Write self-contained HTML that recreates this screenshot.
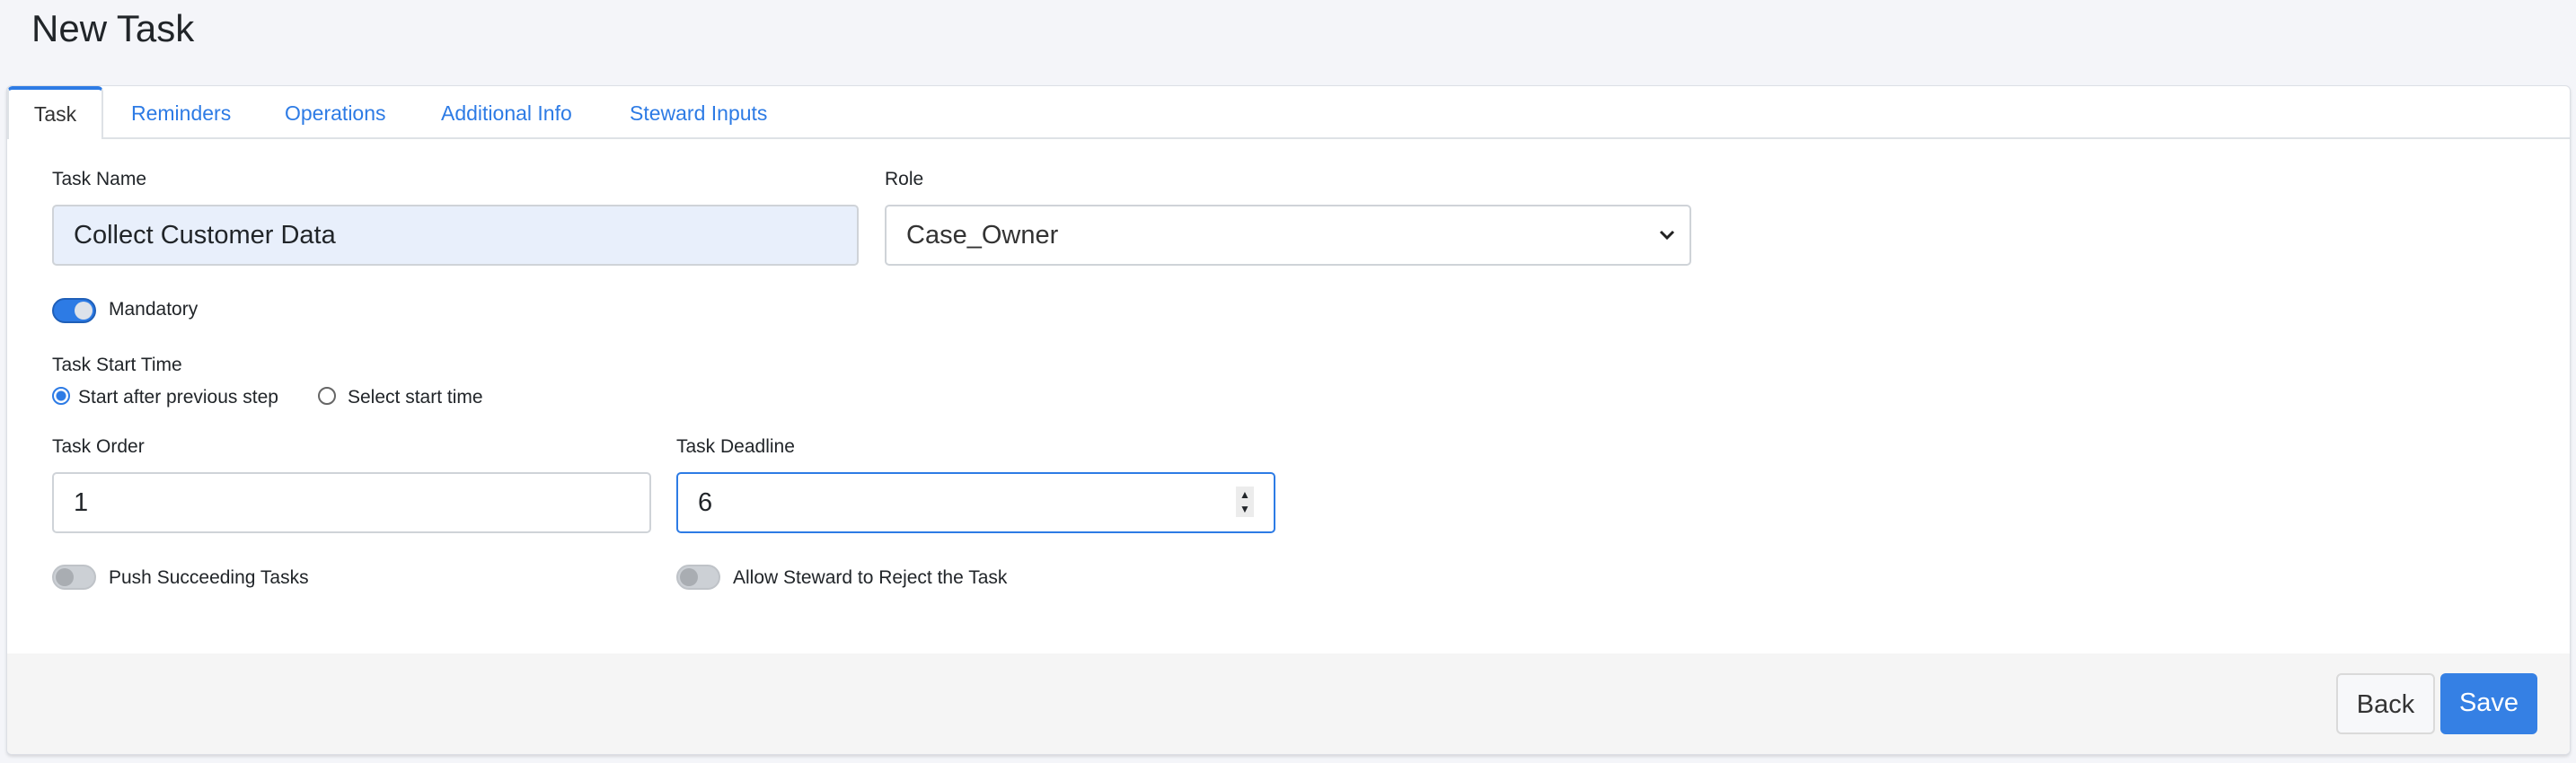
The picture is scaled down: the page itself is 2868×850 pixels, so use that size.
<!DOCTYPE html>
<html><head><style>
*{box-sizing:border-box;margin:0;padding:0}
body{width:2868px;height:850px;background:#f4f5f9;font-family:"Liberation Sans",Arial,sans-serif;color:#212529;position:relative;overflow:hidden}
.a{position:absolute}
.title{left:35px;top:6px;font-size:42px;line-height:52px}
.card{left:7px;top:95px;width:2855px;height:746px;background:#fff;border:1px solid #dcdfe5;border-radius:6px;overflow:hidden;box-shadow:0 2px 3px rgba(0,0,0,.12)}
.tabline{left:0;top:57px;width:100%;height:2px;background:#dee2e6}
.tab{top:0;height:59px;font-size:23px;line-height:60px;color:#2d7be5}
.tab0{left:0;width:107px;border:2px solid #dee2e6;border-top:4px solid #2d7be5;border-bottom:none;background:#fff;color:#333;text-align:center;border-radius:6px 6px 0 0;line-height:54px}
.lbl{font-size:21px;color:#212529}
.inp{border:2px solid #cfd3d8;border-radius:5px;font-size:29px;line-height:64px;padding-left:22px}
.tog{width:49px;height:28px;border-radius:14px}
.foot{left:0;top:632px;width:100%;height:114px;background:#f5f5f5}
.btn{top:654px;height:68px;border-radius:6px;font-size:29px;line-height:66px;text-align:center}
</style></head><body>
<div class="a title">New Task</div>
<div class="a card">
 <div class="a tabline"></div>
 <div class="a tab tab0">Task</div>
 <div class="a tab" style="left:138px">Reminders</div>
 <div class="a tab" style="left:309px">Operations</div>
 <div class="a tab" style="left:483px">Additional Info</div>
 <div class="a tab" style="left:693px">Steward Inputs</div>

 <div class="a lbl" style="left:50px;top:92px">Task Name</div>
 <div class="a inp" style="left:50px;top:132px;width:898px;height:68px;background:#e8effb">Collect Customer Data</div>
 <div class="a lbl" style="left:977px;top:92px">Role</div>
 <div class="a inp" style="left:977px;top:132px;width:898px;height:68px;background:#fff;color:#333">Case_Owner
  <svg class="a" style="right:16px;top:26px" width="18" height="12" viewBox="0 0 18 12"><path d="M2 2l7 7 7-7" fill="none" stroke="#222" stroke-width="3"/></svg></div>

 <div class="a tog" style="left:50px;top:236px;background:#2d7be5;border:2px solid #1f5fb8"><div class="a" style="right:2px;top:2px;width:20px;height:20px;border-radius:50%;background:#dde2ea"></div></div>
 <div class="a lbl" style="left:113px;top:237px">Mandatory</div>

 <div class="a lbl" style="left:50px;top:299px">Task Start Time</div>
 <div class="a" style="left:50px;top:335px;width:20px;height:20px;border-radius:50%;border:2px solid #2d7be5;background:radial-gradient(circle,#2d7be5 5px,#fff 6px)"></div>
 <div class="a lbl" style="left:79px;top:335px">Start after previous step</div>
 <div class="a" style="left:346px;top:335px;width:20px;height:20px;border-radius:50%;border:2px solid #666;background:#fff"></div>
 <div class="a lbl" style="left:379px;top:335px">Select start time</div>

 <div class="a lbl" style="left:50px;top:390px">Task Order</div>
 <div class="a inp" style="left:50px;top:430px;width:667px;height:68px">1</div>
 <div class="a lbl" style="left:745px;top:390px">Task Deadline</div>
 <div class="a inp" style="left:745px;top:430px;width:667px;height:68px;border-color:#2d7be5">6
  <div class="a" style="right:22px;top:14px;width:20px;height:34px;background:#ececec;font-size:12px;line-height:16px;text-align:center;padding-top:1px">▲<br>▼</div></div>

 <div class="a tog" style="left:50px;top:533px;background:#ccd0d5;border:2px solid #bfc3c8"><div class="a" style="left:2px;top:2px;width:20px;height:20px;border-radius:50%;background:#a9adb2"></div></div>
 <div class="a lbl" style="left:113px;top:536px">Push Succeeding Tasks</div>
 <div class="a tog" style="left:745px;top:533px;background:#ccd0d5;border:2px solid #bfc3c8"><div class="a" style="left:2px;top:2px;width:20px;height:20px;border-radius:50%;background:#a9adb2"></div></div>
 <div class="a lbl" style="left:808px;top:536px">Allow Steward to Reject the Task</div>

 <div class="a foot"></div>
 <div class="a btn" style="left:2593px;width:110px;background:#f7f8fa;border:2px solid #dadada;color:#333">Back</div>
 <div class="a btn" style="left:2709px;width:108px;background:#3580e4;color:#fff">Save</div>
</div>
</body></html>
